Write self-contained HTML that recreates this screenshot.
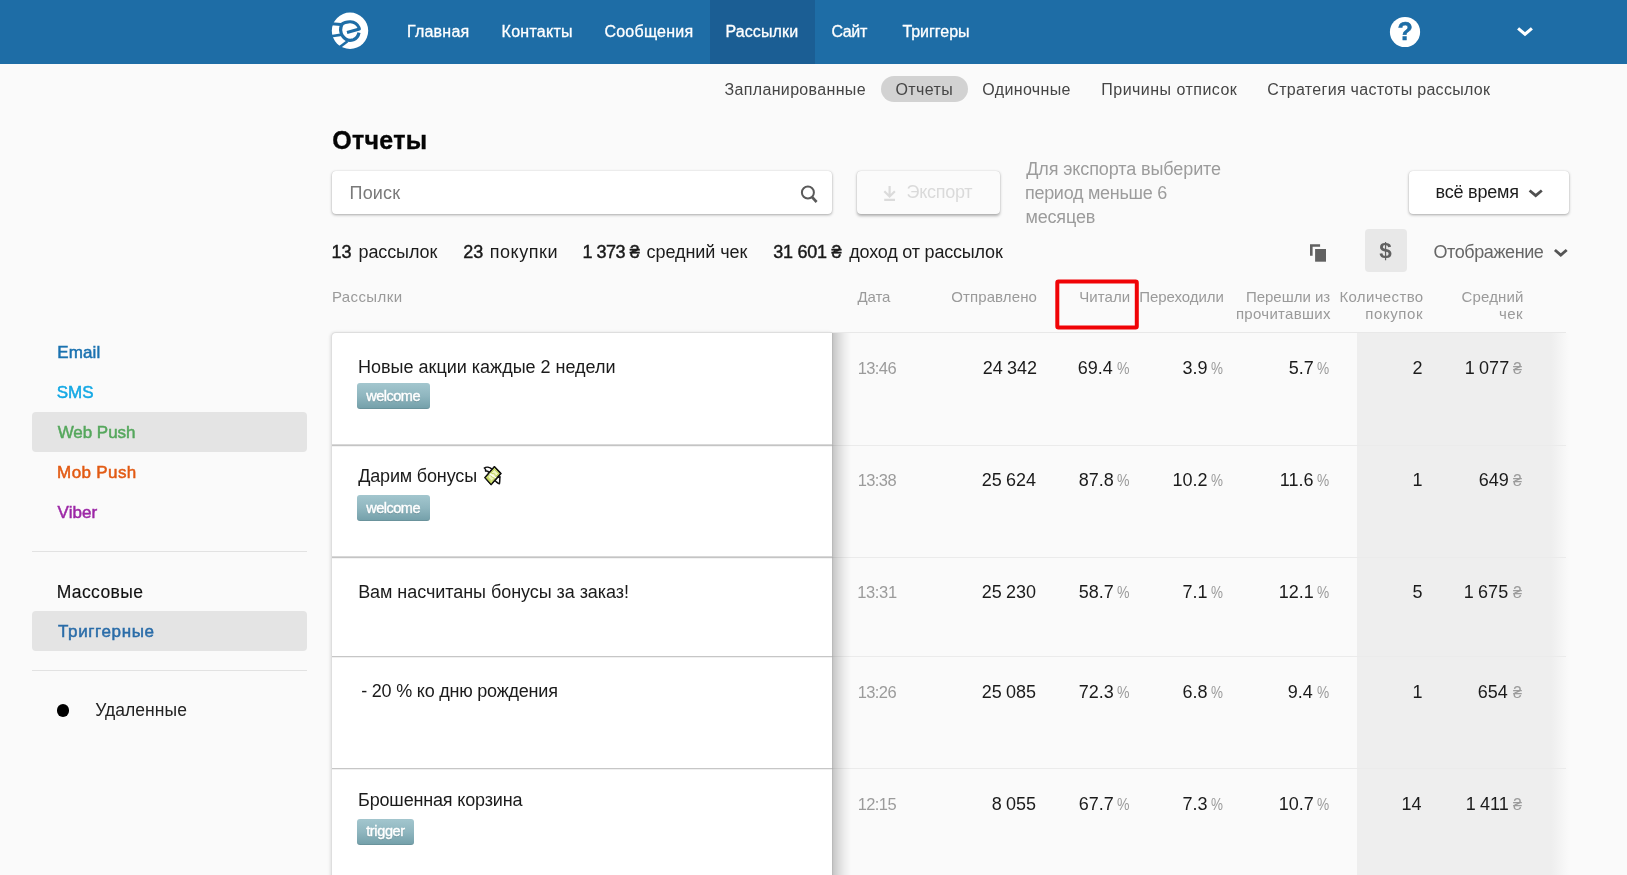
<!DOCTYPE html>
<html lang="ru"><head><meta charset="utf-8"><title>Отчеты</title>
<style>
html,body{margin:0;padding:0}
html{width:1627px;height:875px;overflow:hidden}
body{width:1627px;height:875px;overflow:hidden;background:#fafafa;position:relative;font-family:"Liberation Sans",sans-serif}
.t{position:absolute;white-space:pre;line-height:1em;font-family:"Liberation Sans",sans-serif}
.a{position:absolute}
#nav{left:0;top:0;width:1627px;height:64px;background:#1e6da6}
#navact{left:710px;top:0;width:105px;height:64px;background:#1b5e94}
.pill{left:881px;top:76px;width:87px;height:26px;border-radius:13px;background:#d2d2d2}
.box{background:#fff;border-radius:4px;box-shadow:0 1px 3px rgba(0,0,0,.32),0 0 1px rgba(0,0,0,.18)}
#search{left:332px;top:171px;width:500px;height:43px}
#export{left:857px;top:171px;width:143px;height:43px;background:#fbfbfb;box-shadow:0 1.5px 3px rgba(0,0,0,.3),0 0 1px rgba(0,0,0,.2)}
#period{left:1409px;top:171px;width:160px;height:43px}
#dollar{left:1365px;top:229px;width:42px;height:43px;border-radius:4px;background:#e8e8e8}
.sel{left:32px;width:275px;height:40px;border-radius:4px;background:#e4e4e4}
.sep{left:32px;width:275px;height:1px;background:#e2e2e2}
#hline{left:832px;top:332px;width:734px;height:1px;background:#e8e8e8}
#graycol{left:1357px;top:333px;width:212px;height:542px;background:linear-gradient(to right,#eeeeee 0,#eeeeee 194px,#fafafa 212px)}
.rline{left:832px;width:734px;height:1px;background:#ebebeb}
#card{left:331px;top:332px;width:501px;height:560px;background:#fff;border:1px solid #dedede;border-right:none;border-radius:5px 0 0 0;box-sizing:border-box;box-shadow:-1px 0 3px rgba(0,0,0,.10)}
#cshadow{left:832px;top:333px;width:19px;height:542px;background:linear-gradient(to right,rgba(0,0,0,.27) 0,rgba(0,0,0,.2) 1.5px,rgba(0,0,0,.13) 6px,rgba(0,0,0,.055) 12px,rgba(0,0,0,0) 19px)}
.cline{left:332px;width:500px;background:#cfcfcf}
.tag{height:26px;border-radius:3px;background:linear-gradient(to bottom,#a3c6ce 0,#8fb6bf 50%,#739fa9 100%);box-shadow:inset 0 -1px 0 rgba(0,0,0,.08)}
#root{position:absolute;left:0;top:0;width:1627px;height:875px;overflow:hidden;will-change:transform}
</style></head><body><div id="root">
<div class="a" id="nav"></div>
<div class="a" id="navact"></div>
<svg class="a" style="left:325px;top:6px" width="50" height="50" viewBox="0 0 50 50">
<circle cx="25" cy="24.8" r="18.2" fill="#fff"/>
<g fill="none" stroke="#1e6da6" stroke-linecap="butt" stroke-linejoin="round">
<path d="M6.5 17.8 L16 18.6 Q20 15.6 25.3 15.7 Q31.8 16.1 34 21.6 L34.4 23 L22 26.5" stroke-width="3"/>
<path d="M17.2 18 Q13.8 24 17.6 30 Q21.8 36 28.4 33.8 Q33 31.8 34 26.6" stroke-width="3.2"/>
<path d="M6 30.2 L17 28.6" stroke-width="2.6"/>
<path d="M14.5 41.3 L22.5 35.3" stroke-width="2.6"/>
</g>
</svg>

<svg class="a" style="left:1389px;top:16px" width="32" height="32" viewBox="0 0 32 32">
<circle cx="16" cy="16" r="15.1" fill="#fff"/>
<text x="16.2" y="24.4" text-anchor="middle" font-family="Liberation Sans, sans-serif" font-weight="700" font-size="25" fill="#1e6da6" stroke="#1e6da6" stroke-width="0.5">?</text>
</svg>
<svg class="a" style="left:1515px;top:24px" width="20" height="16" viewBox="0 0 20 16">
<path d="M3.1 4.4 L10 10.3 L16.9 4.4" fill="none" stroke="#fff" stroke-width="3.1"/>
</svg>

<div class="a pill"></div>
<div class="a box" id="search"></div>
<div class="a box" id="export"></div>
<div class="a box" id="period"></div>
<div class="a" id="dollar"></div>
<div class="a sel" style="top:412px"></div>
<div class="a sel" style="top:611px"></div>
<div class="a sep" style="top:551px"></div>
<div class="a sep" style="top:670px"></div>
<div class="a" style="left:56.8px;top:704.2px;width:12.4px;height:12.4px;border-radius:50%;background:#000"></div>
<div class="a" id="graycol"></div>
<div class="a" id="hline"></div>
<div class="a rline" style="top:444.5px"></div>
<div class="a rline" style="top:556.5px"></div>
<div class="a rline" style="top:656px"></div>
<div class="a rline" style="top:768px"></div>
<div class="a" id="card"></div>
<div class="a cline" style="top:444px;height:3px;background:linear-gradient(#d8d8d8 0,#d8d8d8 33.3%,#c4c4c4 33.3%,#c4c4c4 66.6%,#f3f3f3 66.6%)"></div>
<div class="a cline" style="top:556px;height:3px;background:linear-gradient(#d8d8d8 0,#d8d8d8 33.3%,#c4c4c4 33.3%,#c4c4c4 66.6%,#f3f3f3 66.6%)"></div>
<div class="a cline" style="top:656px;height:2px;background:linear-gradient(#c6c6c6 0,#c6c6c6 50%,#f0f0f0 50%)"></div>
<div class="a cline" style="top:768px;height:2px;background:linear-gradient(#c6c6c6 0,#c6c6c6 50%,#f0f0f0 50%)"></div>
<div class="a" id="cshadow"></div>
<div class="a tag" style="left:357px;top:383px;width:73px"></div>
<div class="a tag" style="left:357px;top:495px;width:73px"></div>
<div class="a tag" style="left:357px;top:819px;width:57px"></div>
<svg class="a" style="left:798px;top:182px" width="24" height="24" viewBox="0 0 24 24">
<circle cx="9.9" cy="10.5" r="6" fill="none" stroke="#5a5a5a" stroke-width="2"/>
<path d="M14 15 L18.6 20" stroke="#5a5a5a" stroke-width="2.6" fill="none"/>
</svg>
<svg class="a" style="left:880px;top:183px" width="20" height="20" viewBox="0 0 20 20">
<g fill="none" stroke="#dbdbdb" stroke-width="2.2"><path d="M9.6 3 V13.2 M4.3 8.2 L9.6 13.5 L14.9 8.2 M4.2 16.8 H15"/></g>
</svg>
<svg class="a" style="left:1526px;top:186px" width="20" height="16" viewBox="0 0 20 16">
<path d="M3.6 4.5 L9.7 9.6 L15.8 4.5" fill="none" stroke="#505050" stroke-width="2.8"/>
</svg>
<svg class="a" style="left:1551px;top:246px" width="20" height="16" viewBox="0 0 20 16">
<path d="M3.9 4 L9.8 9 L15.7 4" fill="none" stroke="#555" stroke-width="2.9"/>
</svg>
<svg class="a" style="left:1305px;top:240px" width="26" height="26" viewBox="0 0 26 26">
<path d="M6.3 15.8 V5.5 H15.1" fill="none" stroke="#616161" stroke-width="2.6"/>
<rect x="10.1" y="9" width="10.9" height="12.7" fill="#616161"/>
</svg>
<span class="t" style="left:1379.3px;top:240px;font-size:22.5px;font-weight:700;color:#616161">$</span>
<svg class="a" style="left:480px;top:462px" width="26" height="28" viewBox="0 0 26 28">
<path d="M4.3 6 C6.2 4.7 9.6 4.9 12.2 7.4 L9.2 11 C8.4 9.2 6.6 8.9 5.6 9.1 C6 7.8 5.2 6.7 4.3 6 Z" fill="#fff" stroke="#111" stroke-width="1.5" stroke-linejoin="round"/>
<path d="M16.2 15.8 L20 14.8 C19.6 17.4 20 19.8 19.4 21.7 C18 21.9 17 20.2 15 18.6 Z" fill="#fff" stroke="#111" stroke-width="1.5" stroke-linejoin="round"/>
<path d="M14.4 4.6 L20.9 11.5 L11.1 22.6 L4.9 15.6 Z" fill="#d6e676" stroke="#151515" stroke-width="1.3" stroke-linejoin="round"/>
<path d="M11.1 22.6 L4.9 15.6 L6.1 14.3 L12.3 21.3 Z" fill="#c3d65a"/>
<path d="M14.3 7.4 L18.4 11.6 L11.6 19.2 L7.7 14.9 Z" fill="#f1f6c2" stroke="#b9cc5a" stroke-width="0.8"/>
<circle cx="13.1" cy="13.4" r="2.1" fill="none" stroke="#c2d463" stroke-width="0.9"/>
<path d="M9.6 11.6 L16.6 16.2" stroke="#fff" stroke-width="1.3" opacity=".95"/>
<path d="M14.4 4.6 L20.9 11.5 L11.1 22.6 L4.9 15.6 Z" fill="none" stroke="#151515" stroke-width="1.3" stroke-linejoin="round"/>
</svg>

<span class="t" style="left:406.90px;top:24px;color:#ffffff;font-size:16px;font-weight:400;letter-spacing:0.233px;-webkit-text-stroke:0.3px #fff;">Главная</span>
<span class="t" style="left:501.60px;top:24px;color:#ffffff;font-size:16px;font-weight:400;letter-spacing:0.257px;-webkit-text-stroke:0.3px #fff;">Контакты</span>
<span class="t" style="left:604.45px;top:24px;color:#ffffff;font-size:16px;font-weight:400;letter-spacing:0.237px;-webkit-text-stroke:0.3px #fff;">Сообщения</span>
<span class="t" style="left:725.45px;top:24px;color:#ffffff;font-size:16px;font-weight:400;letter-spacing:0.129px;-webkit-text-stroke:0.3px #fff;">Рассылки</span>
<span class="t" style="left:831.45px;top:24px;color:#ffffff;font-size:16px;font-weight:400;letter-spacing:-0.367px;-webkit-text-stroke:0.3px #fff;">Сайт</span>
<span class="t" style="left:902.40px;top:24px;color:#ffffff;font-size:16px;font-weight:400;letter-spacing:-0.029px;-webkit-text-stroke:0.3px #fff;">Триггеры</span>
<span class="t" style="left:724.58px;top:82px;color:#454545;font-size:16px;font-weight:400;letter-spacing:0.332px;">Запланированные</span>
<span class="t" style="left:895.50px;top:82px;color:#454545;font-size:16px;font-weight:400;letter-spacing:0.400px;">Отчеты</span>
<span class="t" style="left:982.30px;top:82px;color:#454545;font-size:16px;font-weight:400;letter-spacing:0.350px;">Одиночные</span>
<span class="t" style="left:1101.35px;top:82px;color:#454545;font-size:16px;font-weight:400;letter-spacing:0.464px;">Причины отписок</span>
<span class="t" style="left:1267.35px;top:82px;color:#454545;font-size:16px;font-weight:400;letter-spacing:0.300px;">Стратегия частоты рассылок</span>
<span class="t" style="left:332.20px;top:128px;color:#050505;font-size:25px;font-weight:700;letter-spacing:0.320px;-webkit-text-stroke:0.35px #050505;">Отчеты</span>
<span class="t" style="left:349.60px;top:184px;color:#7a7a7a;font-size:18px;font-weight:400;letter-spacing:0.150px;">Поиск</span>
<span class="t" style="left:906.55px;top:183px;color:#dadada;font-size:18px;font-weight:400;letter-spacing:-0.283px;">Экспорт</span>
<span class="t" style="left:1026.20px;top:160px;color:#9c9c9c;font-size:18px;font-weight:400;letter-spacing:-0.100px;">Для экспорта выберите</span>
<span class="t" style="left:1024.95px;top:184px;color:#9c9c9c;font-size:18px;font-weight:400;letter-spacing:-0.279px;">период меньше 6</span>
<span class="t" style="left:1025.45px;top:208px;color:#9c9c9c;font-size:18px;font-weight:400;letter-spacing:-0.150px;">месяцев</span>
<span class="t" style="left:1435.50px;top:183px;color:#1c1c1c;font-size:18px;font-weight:400;letter-spacing:-0.200px;">всё время</span>
<span class="t" style="left:331.50px;top:243px;color:#1a1a1a;font-size:18px;font-weight:400;letter-spacing:0.000px;-webkit-text-stroke:0.45px #1a1a1a;">13</span>
<span class="t" style="left:358.50px;top:243px;color:#1b1b1b;font-size:18px;font-weight:400;letter-spacing:-0.114px;">рассылок</span>
<span class="t" style="left:463.25px;top:243px;color:#1a1a1a;font-size:18px;font-weight:400;letter-spacing:0.000px;-webkit-text-stroke:0.45px #1a1a1a;">23</span>
<span class="t" style="left:489.75px;top:243px;color:#1b1b1b;font-size:18px;font-weight:400;letter-spacing:0.550px;">покупки</span>
<span class="t" style="left:582.40px;top:243px;color:#1a1a1a;font-size:18px;font-weight:400;letter-spacing:-0.467px;-webkit-text-stroke:0.45px #1a1a1a;">1 373 ₴</span>
<span class="t" style="left:646.60px;top:243px;color:#1b1b1b;font-size:18px;font-weight:400;letter-spacing:-0.060px;">средний чек</span>
<span class="t" style="left:773.25px;top:243px;color:#1a1a1a;font-size:18px;font-weight:400;letter-spacing:-0.243px;-webkit-text-stroke:0.45px #1a1a1a;">31 601 ₴</span>
<span class="t" style="left:849.25px;top:243px;color:#1b1b1b;font-size:18px;font-weight:400;letter-spacing:-0.194px;">доход от рассылок</span>
<span class="t" style="left:1433.40px;top:243px;color:#666;font-size:18px;font-weight:400;letter-spacing:-0.400px;">Отображение</span>
<span class="t" style="left:331.90px;top:289px;color:#9a9a9a;font-size:15px;font-weight:400;letter-spacing:0.400px;">Рассылки</span>
<span class="t" style="left:857.60px;top:289px;color:#9a9a9a;font-size:15px;font-weight:400;letter-spacing:-0.133px;">Дата</span>
<span class="t" style="left:951.15px;top:289px;color:#9a9a9a;font-size:15px;font-weight:400;letter-spacing:0.122px;">Отправлено</span>
<span class="t" style="left:1079.30px;top:289px;color:#9a9a9a;font-size:15px;font-weight:400;letter-spacing:0.080px;">Читали</span>
<span class="t" style="left:1139.20px;top:289px;color:#9a9a9a;font-size:15px;font-weight:400;letter-spacing:-0.044px;">Переходили</span>
<span class="t" style="left:1245.95px;top:289px;color:#9a9a9a;font-size:15px;font-weight:400;letter-spacing:-0.011px;">Перешли из</span>
<span class="t" style="left:1235.90px;top:306px;color:#9a9a9a;font-size:15px;font-weight:400;letter-spacing:0.300px;">прочитавших</span>
<span class="t" style="left:1339.40px;top:289px;color:#9a9a9a;font-size:15px;font-weight:400;letter-spacing:0.356px;">Количество</span>
<span class="t" style="left:1365.25px;top:306px;color:#9a9a9a;font-size:15px;font-weight:400;letter-spacing:0.583px;">покупок</span>
<span class="t" style="left:1461.60px;top:289px;color:#9a9a9a;font-size:15px;font-weight:400;letter-spacing:0.133px;">Средний</span>
<span class="t" style="left:1499.05px;top:306px;color:#9a9a9a;font-size:15px;font-weight:400;letter-spacing:0.450px;">чек</span>
<span class="t" style="left:57.15px;top:344px;color:#1b72b0;font-size:17px;font-weight:400;letter-spacing:0.175px;-webkit-text-stroke:0.5px #1b72b0;">Email</span>
<span class="t" style="left:56.75px;top:384px;color:#13a8e4;font-size:17px;font-weight:400;letter-spacing:-0.050px;-webkit-text-stroke:0.5px #13a8e4;">SMS</span>
<span class="t" style="left:57.65px;top:424px;color:#55a75c;font-size:17px;font-weight:400;letter-spacing:-0.043px;-webkit-text-stroke:0.5px #55a75c;">Web Push</span>
<span class="t" style="left:57.10px;top:464px;color:#e25a13;font-size:17px;font-weight:400;letter-spacing:0.371px;-webkit-text-stroke:0.5px #e25a13;">Mob Push</span>
<span class="t" style="left:57.50px;top:504px;color:#9c27a6;font-size:17px;font-weight:400;letter-spacing:0.100px;-webkit-text-stroke:0.5px #9c27a6;">Viber</span>
<span class="t" style="left:56.65px;top:584px;color:#111;font-size:17.5px;font-weight:400;letter-spacing:0.386px;-webkit-text-stroke:0.15px #111;">Массовые</span>
<span class="t" style="left:58.05px;top:623px;color:#2a6ca8;font-size:17px;font-weight:400;letter-spacing:0.611px;-webkit-text-stroke:0.5px #2a6ca8;">Триггерные</span>
<span class="t" style="left:95.20px;top:702px;color:#222;font-size:17.5px;font-weight:400;letter-spacing:0.050px;">Удаленные</span>
<span class="t" style="left:358.05px;top:358px;color:#1b1b1b;font-size:18px;font-weight:400;letter-spacing:-0.004px;">Новые акции каждые 2 недели</span>
<span class="t" style="left:358.15px;top:467px;color:#1b1b1b;font-size:18px;font-weight:400;letter-spacing:-0.155px;">Дарим бонусы</span>
<span class="t" style="left:358.15px;top:583px;color:#1b1b1b;font-size:18px;font-weight:400;letter-spacing:-0.052px;">Вам насчитаны бонусы за заказ!</span>
<span class="t" style="left:361.25px;top:682px;color:#1b1b1b;font-size:18px;font-weight:400;letter-spacing:-0.214px;">- 20 % ко дню рождения</span>
<span class="t" style="left:358.05px;top:791px;color:#1b1b1b;font-size:18px;font-weight:400;letter-spacing:-0.169px;">Брошенная корзина</span>
<span class="t" style="left:366.30px;top:389px;color:#fff;font-size:14.5px;font-weight:400;letter-spacing:-0.500px;-webkit-text-stroke:0.4px #fff;text-shadow:0 1px 1px rgba(0,0,0,.18);">welcome</span>
<span class="t" style="left:366.30px;top:501px;color:#fff;font-size:14.5px;font-weight:400;letter-spacing:-0.500px;-webkit-text-stroke:0.4px #fff;text-shadow:0 1px 1px rgba(0,0,0,.18);">welcome</span>
<span class="t" style="left:366.15px;top:824px;color:#fff;font-size:14.5px;font-weight:400;letter-spacing:-0.350px;-webkit-text-stroke:0.4px #fff;text-shadow:0 1px 1px rgba(0,0,0,.18);">trigger</span>
<span class="t" style="left:857.65px;top:360px;color:#9b9b9b;font-size:16.5px;font-weight:400;letter-spacing:-0.575px;">13:46</span>
<span class="t" style="left:982.70px;top:359px;color:#1b1b1b;font-size:18px;font-weight:400;letter-spacing:0.000px;word-spacing:-0.7px;">24 342</span>
<span class="t" style="left:1077.70px;top:359px;color:#1b1b1b;font-size:18px;font-weight:400;letter-spacing:0.000px;">69.4</span>
<span class="t" style="left:1182.60px;top:359px;color:#1b1b1b;font-size:18px;font-weight:400;letter-spacing:0.000px;">3.9</span>
<span class="t" style="left:1288.80px;top:359px;color:#1b1b1b;font-size:18px;font-weight:400;letter-spacing:0.000px;">5.7</span>
<span class="t" style="left:1412.40px;top:359px;color:#1b1b1b;font-size:18px;font-weight:400;letter-spacing:0.000px;">2</span>
<span class="t" style="left:1464.80px;top:359px;color:#1b1b1b;font-size:18px;font-weight:400;letter-spacing:0.000px;word-spacing:-0.7px;">1 077</span>
<span class="t" style="left:1512.90px;top:361px;color:#9b9b9b;font-size:16px;font-weight:400;letter-spacing:0.000px;">₴</span>
<span class="t" style="left:1117.05px;top:360px;color:#9b9b9b;font-size:16.5px;font-weight:400;letter-spacing:0.000px;transform:scaleX(0.854);transform-origin:0 0;">%</span>
<span class="t" style="left:1210.98px;top:360px;color:#9b9b9b;font-size:16.5px;font-weight:400;letter-spacing:0.000px;transform:scaleX(0.815);transform-origin:0 0;">%</span>
<span class="t" style="left:1317.17px;top:360px;color:#9b9b9b;font-size:16.5px;font-weight:400;letter-spacing:0.000px;transform:scaleX(0.831);transform-origin:0 0;">%</span>
<span class="t" style="left:857.65px;top:472px;color:#9b9b9b;font-size:16.5px;font-weight:400;letter-spacing:-0.575px;">13:38</span>
<span class="t" style="left:981.70px;top:471px;color:#1b1b1b;font-size:18px;font-weight:400;letter-spacing:0.000px;word-spacing:-0.7px;">25 624</span>
<span class="t" style="left:1078.70px;top:471px;color:#1b1b1b;font-size:18px;font-weight:400;letter-spacing:0.000px;">87.8</span>
<span class="t" style="left:1172.60px;top:471px;color:#1b1b1b;font-size:18px;font-weight:400;letter-spacing:0.000px;">10.2</span>
<span class="t" style="left:1279.80px;top:471px;color:#1b1b1b;font-size:18px;font-weight:400;letter-spacing:0.000px;">11.6</span>
<span class="t" style="left:1412.40px;top:471px;color:#1b1b1b;font-size:18px;font-weight:400;letter-spacing:0.000px;">1</span>
<span class="t" style="left:1478.80px;top:471px;color:#1b1b1b;font-size:18px;font-weight:400;letter-spacing:0.000px;word-spacing:-0.7px;">649</span>
<span class="t" style="left:1512.90px;top:473px;color:#9b9b9b;font-size:16px;font-weight:400;letter-spacing:0.000px;">₴</span>
<span class="t" style="left:1117.05px;top:472px;color:#9b9b9b;font-size:16.5px;font-weight:400;letter-spacing:0.000px;transform:scaleX(0.854);transform-origin:0 0;">%</span>
<span class="t" style="left:1210.98px;top:472px;color:#9b9b9b;font-size:16.5px;font-weight:400;letter-spacing:0.000px;transform:scaleX(0.815);transform-origin:0 0;">%</span>
<span class="t" style="left:1317.17px;top:472px;color:#9b9b9b;font-size:16.5px;font-weight:400;letter-spacing:0.000px;transform:scaleX(0.831);transform-origin:0 0;">%</span>
<span class="t" style="left:857.15px;top:584px;color:#9b9b9b;font-size:16.5px;font-weight:400;letter-spacing:-0.325px;">13:31</span>
<span class="t" style="left:981.70px;top:583px;color:#1b1b1b;font-size:18px;font-weight:400;letter-spacing:0.000px;word-spacing:-0.7px;">25 230</span>
<span class="t" style="left:1078.70px;top:583px;color:#1b1b1b;font-size:18px;font-weight:400;letter-spacing:0.000px;">58.7</span>
<span class="t" style="left:1182.60px;top:583px;color:#1b1b1b;font-size:18px;font-weight:400;letter-spacing:0.000px;">7.1</span>
<span class="t" style="left:1278.80px;top:583px;color:#1b1b1b;font-size:18px;font-weight:400;letter-spacing:0.000px;">12.1</span>
<span class="t" style="left:1412.40px;top:583px;color:#1b1b1b;font-size:18px;font-weight:400;letter-spacing:0.000px;">5</span>
<span class="t" style="left:1463.80px;top:583px;color:#1b1b1b;font-size:18px;font-weight:400;letter-spacing:0.000px;word-spacing:-0.7px;">1 675</span>
<span class="t" style="left:1512.90px;top:585px;color:#9b9b9b;font-size:16px;font-weight:400;letter-spacing:0.000px;">₴</span>
<span class="t" style="left:1117.05px;top:584px;color:#9b9b9b;font-size:16.5px;font-weight:400;letter-spacing:0.000px;transform:scaleX(0.854);transform-origin:0 0;">%</span>
<span class="t" style="left:1210.98px;top:584px;color:#9b9b9b;font-size:16.5px;font-weight:400;letter-spacing:0.000px;transform:scaleX(0.815);transform-origin:0 0;">%</span>
<span class="t" style="left:1317.17px;top:584px;color:#9b9b9b;font-size:16.5px;font-weight:400;letter-spacing:0.000px;transform:scaleX(0.831);transform-origin:0 0;">%</span>
<span class="t" style="left:857.65px;top:684px;color:#9b9b9b;font-size:16.5px;font-weight:400;letter-spacing:-0.575px;">13:26</span>
<span class="t" style="left:981.70px;top:683px;color:#1b1b1b;font-size:18px;font-weight:400;letter-spacing:0.000px;word-spacing:-0.7px;">25 085</span>
<span class="t" style="left:1078.70px;top:683px;color:#1b1b1b;font-size:18px;font-weight:400;letter-spacing:0.000px;">72.3</span>
<span class="t" style="left:1182.60px;top:683px;color:#1b1b1b;font-size:18px;font-weight:400;letter-spacing:0.000px;">6.8</span>
<span class="t" style="left:1287.80px;top:683px;color:#1b1b1b;font-size:18px;font-weight:400;letter-spacing:0.000px;">9.4</span>
<span class="t" style="left:1412.40px;top:683px;color:#1b1b1b;font-size:18px;font-weight:400;letter-spacing:0.000px;">1</span>
<span class="t" style="left:1477.80px;top:683px;color:#1b1b1b;font-size:18px;font-weight:400;letter-spacing:0.000px;word-spacing:-0.7px;">654</span>
<span class="t" style="left:1512.90px;top:685px;color:#9b9b9b;font-size:16px;font-weight:400;letter-spacing:0.000px;">₴</span>
<span class="t" style="left:1117.05px;top:684px;color:#9b9b9b;font-size:16.5px;font-weight:400;letter-spacing:0.000px;transform:scaleX(0.854);transform-origin:0 0;">%</span>
<span class="t" style="left:1210.98px;top:684px;color:#9b9b9b;font-size:16.5px;font-weight:400;letter-spacing:0.000px;transform:scaleX(0.815);transform-origin:0 0;">%</span>
<span class="t" style="left:1317.17px;top:684px;color:#9b9b9b;font-size:16.5px;font-weight:400;letter-spacing:0.000px;transform:scaleX(0.831);transform-origin:0 0;">%</span>
<span class="t" style="left:857.65px;top:796px;color:#9b9b9b;font-size:16.5px;font-weight:400;letter-spacing:-0.575px;">12:15</span>
<span class="t" style="left:991.70px;top:795px;color:#1b1b1b;font-size:18px;font-weight:400;letter-spacing:0.000px;word-spacing:-0.7px;">8 055</span>
<span class="t" style="left:1078.70px;top:795px;color:#1b1b1b;font-size:18px;font-weight:400;letter-spacing:0.000px;">67.7</span>
<span class="t" style="left:1182.60px;top:795px;color:#1b1b1b;font-size:18px;font-weight:400;letter-spacing:0.000px;">7.3</span>
<span class="t" style="left:1278.80px;top:795px;color:#1b1b1b;font-size:18px;font-weight:400;letter-spacing:0.000px;">10.7</span>
<span class="t" style="left:1401.40px;top:795px;color:#1b1b1b;font-size:18px;font-weight:400;letter-spacing:0.000px;">14</span>
<span class="t" style="left:1465.80px;top:795px;color:#1b1b1b;font-size:18px;font-weight:400;letter-spacing:0.000px;word-spacing:-0.7px;">1 411</span>
<span class="t" style="left:1512.90px;top:797px;color:#9b9b9b;font-size:16px;font-weight:400;letter-spacing:0.000px;">₴</span>
<span class="t" style="left:1117.05px;top:796px;color:#9b9b9b;font-size:16.5px;font-weight:400;letter-spacing:0.000px;transform:scaleX(0.854);transform-origin:0 0;">%</span>
<span class="t" style="left:1210.98px;top:796px;color:#9b9b9b;font-size:16.5px;font-weight:400;letter-spacing:0.000px;transform:scaleX(0.815);transform-origin:0 0;">%</span>
<span class="t" style="left:1317.17px;top:796px;color:#9b9b9b;font-size:16.5px;font-weight:400;letter-spacing:0.000px;transform:scaleX(0.831);transform-origin:0 0;">%</span>
<svg class="a" style="left:1050px;top:275px" width="95" height="60" viewBox="0 0 95 60"><rect x="7.3" y="6.6" width="79.5" height="45.9" rx="1.2" fill="none" stroke="#f00306" stroke-width="4"/></svg>
</div></body></html>
